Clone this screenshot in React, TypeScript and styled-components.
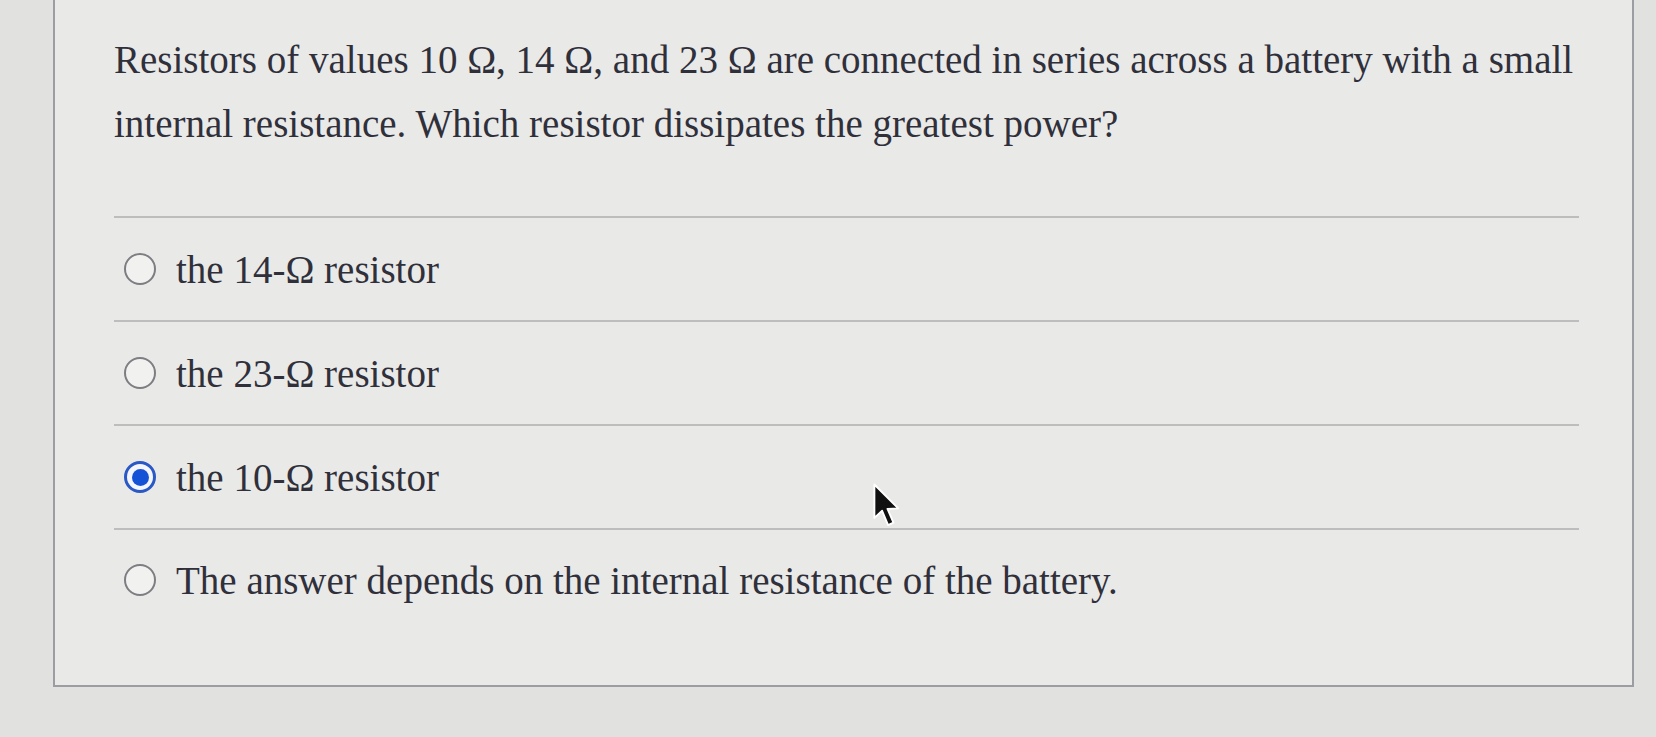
import styled, { createGlobalStyle } from "styled-components"

const GlobalStyle = createGlobalStyle`
  html, body {
    margin: 0;
    padding: 0;
    background: #e1e1df;
  }
  body {
    font-family: "Liberation Serif", "Times New Roman", serif;
  }
`

const Page = styled.div`
  position: relative;
  width: 1656px;
  height: 737px;
  overflow: hidden;
  padding: 0 22px 0 53px;
  box-sizing: border-box;
`

const Card = styled.div`
  box-sizing: border-box;
  width: 100%;
  height: 687px;
  background: #e9e9e8;
  border: 2px solid #9c9ca3;
  border-top: none;
  padding: 28px 53px 0 59px;
`

const Question = styled.p`
  margin: 0;
  font-size: 39px;
  line-height: 64px;
  color: #30303b;
`

const Options = styled.div`
  display: flex;
  flex-direction: column;
  margin-top: 60px;
`

const Row = styled.label`
  display: flex;
  align-items: center;
  gap: 20px;
  height: 104px;
  padding-left: 10px;
  border-top: 2px solid #bdbdbd;
  box-sizing: border-box;
  font-size: 39px;
  color: #30303b;

  &:last-child {
    padding-bottom: 2px;
  }
`

const Radio = styled.span<{ $checked?: boolean }>`
  flex: none;
  width: 32px;
  height: 32px;
  border-radius: 50%;
  box-sizing: border-box;
  border: ${(p) => (p.$checked ? "3px solid #2a58c4" : "2px solid #7d7d82")};
  background: ${(p) => (p.$checked ? "#f4f6fb" : "#f1f1f0")};
  display: flex;
  align-items: center;
  justify-content: center;

  &::after {
    content: "";
    display: ${(p) => (p.$checked ? "block" : "none")};
    width: 17px;
    height: 17px;
    border-radius: 50%;
    background: #1552d6;
  }
`

const Cursor = styled.svg`
  position: absolute;
  left: 872px;
  top: 482px;
  width: 31px;
  height: 48px;
`

const options = [
  { text: "the 14-Ω resistor", checked: false },
  { text: "the 23-Ω resistor", checked: false },
  { text: "the 10-Ω resistor", checked: true },
  { text: "The answer depends on the internal resistance of the battery.", checked: false },
]

const App = () => {
  return (
    <>
      <GlobalStyle />
      <Page>
        <Card>
          <Question>
            Resistors of values 10 Ω, 14 Ω, and 23 Ω are connected in series across a battery with a small
            internal resistance. Which resistor dissipates the greatest power?
          </Question>
          <Options>
            {options.map((o) => (
              <Row key={o.text}>
                <Radio $checked={o.checked} />
                {o.text}
              </Row>
            ))}
          </Options>
        </Card>
        <Cursor viewBox="0 0 26 40">
          <path
            d="M2 2 L2 30 L8.5 24 L13.5 36 L18 34 L13 22.5 L22 22 Z"
            fill="#111"
            stroke="#fff"
            strokeWidth="1.6"
            strokeLinejoin="round"
          />
        </Cursor>
      </Page>
    </>
  )
}

export default App
